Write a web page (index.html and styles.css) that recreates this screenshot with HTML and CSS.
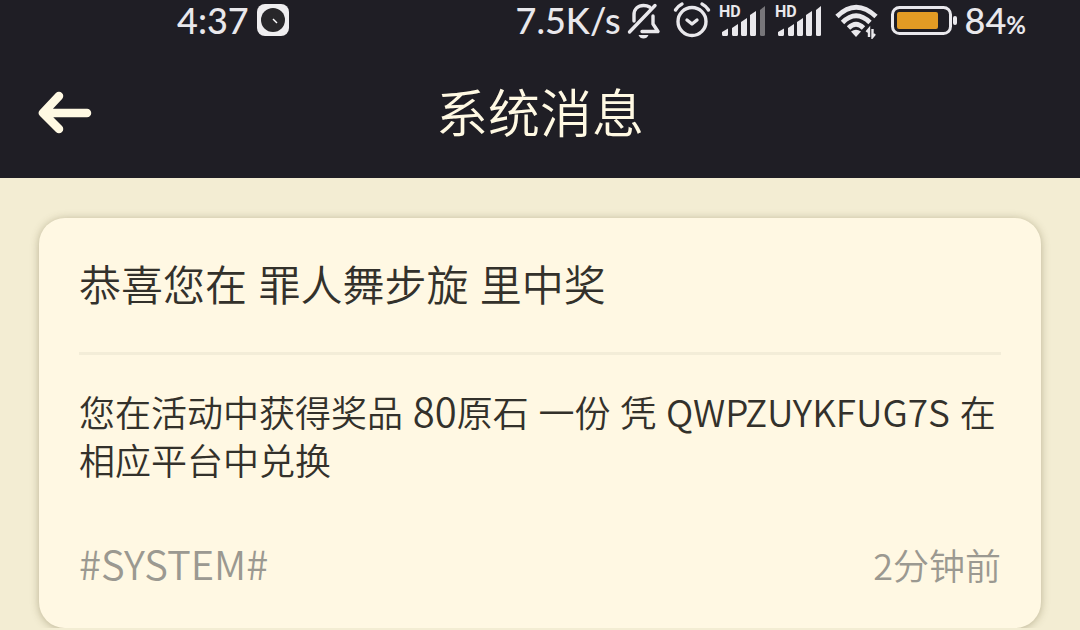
FILE: index.html
```html
<!DOCTYPE html>
<html lang="zh-CN">
<head>
<meta charset="utf-8">
<meta name="viewport" content="width=device-width, initial-scale=1">
<title>系统消息</title>
<link rel="stylesheet" href="styles.css">
</head>
<body>
<header class="top">
  <div class="status">
    <div class="status-left">
      <span class="clock">4:37</span>
      <svg class="icon" width="32" height="32" viewBox="0 0 32 32" aria-hidden="true">
        <rect width="32" height="32" rx="8" fill="#efeef0"/>
        <circle cx="16" cy="16" r="12" fill="#28272a"/>
        <path d="M16 15l4 4" stroke="#fff" stroke-width="1.5"/>
      </svg>
    </div>
    <div class="status-right">
      <span class="speed">7.5K/s</span>
      <svg class="icon bell" width="34" height="38" viewBox="0 0 34 38" fill="none" stroke="#e9e8ec" stroke-width="3.4" stroke-linecap="round" stroke-linejoin="round" aria-hidden="true">
        <path d="M7 20V14C7 8 11 4.500 16.500 4.500C19 4.500 21 5 22.500 6M26 15V23L31 30.500H15M2.500 31L28 4.500"/>
        <path d="M11.500 34H21.500Q20 37.500 16.500 37.500T11.500 34Z" fill="#e9e8ec" stroke="none"/>
      </svg>
      <svg class="icon alarm" width="38" height="38" viewBox="0 0 38 38" fill="none" stroke="#e9e8ec" stroke-width="3.4" stroke-linecap="round" stroke-linejoin="round" aria-hidden="true">
        <circle cx="19" cy="20.500" r="14"/>
        <path d="M2.500 9Q5 5 9 3M29 3Q33 5 35.500 9M14 19L19 23L24 19"/>
      </svg>
      <svg class="icon signal" width="48" height="38" viewBox="0 0 48 38" fill="#e9e8ec" aria-hidden="true">
        <text class="hd" x="0" y="16">HD</text>
        <path d="M3 33.500V31L9 27.500V33.500Q9 35 7.500 35H4.500Q3 35 3 33.500ZM13 33.500V27L19 23V33.500Q19 35 17.500 35H14.500Q13 35 13 33.500ZM22 33.500V21L28 17V33.500Q28 35 26.500 35H23.500Q22 35 22 33.500ZM31 33.500V14L37 10V33.500Q37 35 35.500 35H32.500Q31 35 31 33.500Z"/>
        <path d="M41 33.500V9L46 5V33.500Q46 35 44.500 35H42.500Q41 35 41 33.500Z" fill="#77767a"/>
      </svg>
      <svg class="icon signal" width="48" height="38" viewBox="0 0 48 38" fill="#e9e8ec" aria-hidden="true">
        <text class="hd" x="0" y="16">HD</text>
        <path d="M3 33.500V31L9 27.500V33.500Q9 35 7.500 35H4.500Q3 35 3 33.500ZM13 33.500V27L19 23V33.500Q19 35 17.500 35H14.500Q13 35 13 33.500ZM22 33.500V21L28 17V33.500Q28 35 26.500 35H23.500Q22 35 22 33.500ZM31 33.500V14L37 10V33.500Q37 35 35.500 35H32.500Q31 35 31 33.500Z"/>
        <path d="M41 33.500V9L46 5V33.500Q46 35 44.500 35H42.500Q41 35 41 33.500Z"/>
      </svg>
      <svg class="icon wifi" width="44" height="38" viewBox="0 0 44 38" fill="none" stroke="#e9e8ec" stroke-width="4.800" aria-hidden="true">
        <path d="M2 15.500Q21 -3 41 15.500M7.500 21.500Q21 8 35 21.500M13.500 27Q21 19.500 28.500 27"/>
        <path d="M16 30.500Q21 27 26 30.500L21 36Z" fill="#e9e8ec" stroke="none"/>
        <path d="M34 36V28L31.500 31M37.500 28V36L40 33" stroke-width="2.400"/>
      </svg>
      <svg class="icon battery" width="66" height="38" viewBox="0 0 66 38" fill="none" aria-hidden="true">
        <rect x="1.500" y="6.500" width="58" height="26" rx="7" stroke="#e9e8ec" stroke-width="3"/>
        <rect x="6" y="11" width="41" height="17" rx="2" fill="#e29b24"/>
        <rect x="62" y="15" width="4" height="9" rx="2" fill="#e9e8ec"/>
      </svg>
      <span class="level">84<span class="percent">%</span></span>
    </div>
  </div>
  <div class="bar">
    <button class="back" type="button" aria-label="返回">
      <svg width="54" height="44" viewBox="0 0 54 44" fill="none" stroke="#fff9e3" stroke-width="8.500" stroke-linecap="round" stroke-linejoin="round" aria-hidden="true">
        <path d="M21 5L5 22L21 38M6 22H49"/>
      </svg>
    </button>
    <h1 class="title">系统消息</h1>
  </div>
</header>
<main class="page">
  <article class="card">
    <h2 class="card-title">恭喜您在 罪人舞步旋 里中奖</h2>
    <p class="card-body">您在活动中获得奖品 <span class="amount">80</span>原石 一份 凭 <span class="code">QWPZUYKFUG7S</span> 在相应平台中兑换</p>
    <footer class="card-foot"><span class="sender">#SYSTEM#</span><time>2分钟前</time></footer>
  </article>
</main>
</body>
</html>
```
FILE: styles.css
```css
* { box-sizing: border-box; }
body {
  margin: 0;
  background: #f3edd3;
  color: #33312b;
  font-family: Lato, "Noto Sans CJK SC", sans-serif;
  font-weight: 350;
}
h1, h2, p { margin: 0; font-weight: 350; }
.top { background: #1f1e25; color: #fff9e3; }
.status {
  display: flex;
  justify-content: space-between;
  height: 48px;
  padding: 0 54px 8px 177px;
  color: #e9e8ec;
  font-size: 36px;
  font-weight: 500;
  line-height: 40px;
}
.status-left, .status-right { display: flex; align-items: center; }
.status-left { gap: 8px; }
.icon { display: block; flex: none; }
.bell { margin-left: 6px; }
.alarm { margin-left: 12px; }
.signal { margin-left: 8px; }
.wifi { margin-left: 12px; }
.battery { margin-left: 12px; }
.level { margin-left: 8px; }
.hd { font-family: Roboto, sans-serif; font-size: 16px; font-weight: 700; }
.percent { font-size: 24px; font-weight: 700; line-height: 1; }
.bar {
  display: grid;
  grid-template-columns: 54px 1fr 54px;
  align-items: center;
  height: 130px;
  padding: 0 38px;
}
.back { display: block; padding: 0; border: 0; background: none; cursor: pointer; }
.back svg { display: block; }
.title { font-size: 52px; line-height: 60px; text-align: center; }
.page { padding: 40px 39px 0; }
.card {
  padding: 36px 40px 40px;
  border-radius: 26px;
  background: #fff8e3;
  box-shadow: 0 1px 8px rgba(80, 70, 30, 0.35);
}
.card-title {
  padding-bottom: 36px;
  border-bottom: 3px solid #f3edd8;
  font-size: 42px;
  line-height: 62px;
}
.card-body { padding-top: 34px; font-size: 36px; line-height: 48px; }
.amount, .code, .card-foot { font-family: "Noto Sans CJK SC", sans-serif; }
.amount { font-size: 40px; line-height: 1; }
.code { font-size: 37px; line-height: 1; }
.card-foot {
  display: flex;
  align-items: baseline;
  justify-content: space-between;
  padding-top: 54px;
  color: #9b9991;
  font-size: 36px;
  line-height: 48px;
}
.sender { font-size: 40px; }
```
